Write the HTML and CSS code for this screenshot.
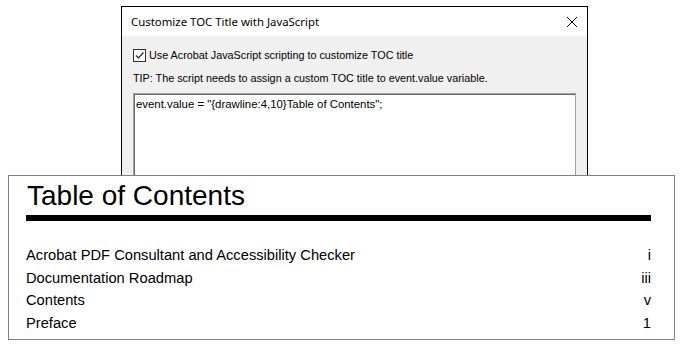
FILE: index.html
```html
<!DOCTYPE html>
<html>
<head>
<meta charset="utf-8">
<link rel="stylesheet" href="styles.css">
</head>
<body>
<div class="stage">
  <div class="dialog">
    <div class="titlebar">
      <span class="title">Customize TOC Title with JavaScript</span>
      <svg class="close" width="12" height="12" viewBox="0 0 12 12"><path d="M1 1L11 11M11 1L1 11" stroke="#000" stroke-width="1" fill="none"/></svg>
    </div>
    <div class="dbody">
      <label class="check">
        <span class="box"><svg width="11" height="11" viewBox="0 0 11 11"><path d="M2 5.5L4.5 8L9.5 2.5" stroke="#222" stroke-width="1.2" fill="none"/></svg></span>
        <span>Use Acrobat JavaScript scripting to customize TOC title</span>
      </label>
      <div class="tip">TIP: The script needs to assign a custom TOC title to event.value variable.</div>
      <div class="code">event.value = "{drawline:4,10}Table of Contents";</div>
    </div>
  </div>
  <div class="toc">
    <div class="toc-title">Table of Contents</div>
    <div class="rule"></div>
    <div class="entries">
      <div class="entry"><span>Acrobat PDF Consultant and Accessibility Checker</span><span>i</span></div>
      <div class="entry"><span>Documentation Roadmap</span><span>iii</span></div>
      <div class="entry"><span>Contents</span><span>v</span></div>
      <div class="entry"><span>Preface</span><span>1</span></div>
    </div>
  </div>
</div>
</body>
</html>
```
FILE: styles.css
```css
html, body {
  margin: 0;
  padding: 0;
  background: #fff;
}
.stage {
  width: 685px;
  height: 348px;
  padding-top: 6px;
  box-sizing: border-box;
}
.dialog {
  margin-left: 121px;
  width: 467px;
  height: 169px;
  box-sizing: border-box;
  border: 1px solid #000;
  border-bottom: none;
  background: #f0f0f0;
  overflow: hidden;
  font-family: "Liberation Sans", Arial, sans-serif;
}
.titlebar {
  height: 29px;
  background: #fff;
  display: flex;
  align-items: center;
  justify-content: space-between;
  padding: 0 8px 0 9px;
}
.title {
  font-family: "Noto Sans", "Open Sans", sans-serif;
  font-size: 11.4px;
  color: #000;
}
.close {
  display: block;
  margin-right: 1px;
}
.dbody {
  padding: 12px 11px 0 11px;
  font-size: 10.8px;
  color: #000;
}
.check {
  display: flex;
  align-items: center;
  gap: 3px;
  height: 14px;
}
.box {
  width: 11px;
  height: 11px;
  border: 1px solid #333;
  background: #fff;
  display: flex;
}
.tip {
  margin-top: 9px;
  height: 14px;
  line-height: 14px;
}
.code {
  margin-top: 8px;
  width: 443px;
  height: 120px;
  box-sizing: border-box;
  background: #fff;
  border: 1px solid #a0a0a0;
  box-shadow: inset 1px 1px 0 #696969;
  padding: 3px 2px;
  line-height: 14px;
  font-size: 11.4px;
}
.toc {
  margin-left: 8px;
  width: 667px;
  height: 165px;
  box-sizing: border-box;
  border: 1px solid #808080;
  background: #fff;
  padding: 4px 23px 0 17px;
  font-family: "Liberation Sans", Arial, sans-serif;
  color: #000;
}
.toc-title {
  font-size: 28px;
  line-height: 32px;
  padding-left: 1px;
}
.rule {
  margin-top: 3px;
  height: 6px;
  background: #000;
}
.entries {
  margin-top: 23px;
  display: flex;
  flex-direction: column;
}
.entry {
  display: flex;
  justify-content: space-between;
  font-size: 14.7px;
  line-height: 22.7px;
  height: 22.7px;
}
```
